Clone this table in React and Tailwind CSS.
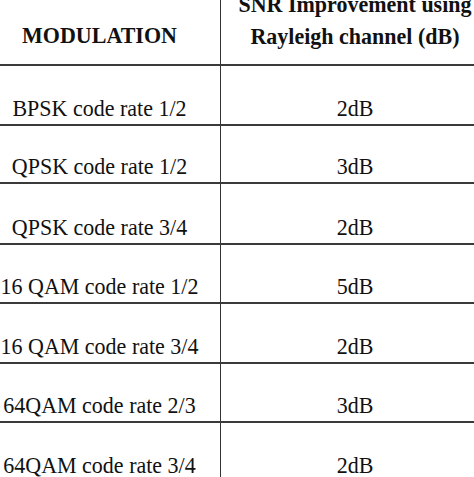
const rows = [
  ['BPSK code rate 1/2', '2dB', 'h-[60px]'],
  ['QPSK code rate 1/2', '3dB', 'h-[58px]'],
  ['QPSK code rate 3/4', '2dB', 'h-[61px]'],
  ['16 QAM code rate 1/2', '5dB', 'h-[59px]'],
  ['16 QAM code rate 3/4', '2dB', 'h-[60px]'],
  ['64QAM code rate 2/3', '3dB', 'h-[59px]'],
  ['64QAM code rate 3/4', '2dB', 'h-[60px]'],
];

export default function App() {
  return (
    <div
      className="w-[474px] h-[477px] overflow-hidden bg-white text-[#111] text-[22px]"
      style={{ fontFamily: '"Liberation Serif", "Times New Roman", serif' }}
    >
      <div className="flex border-b-2 border-[#3a3a3a] h-[66px]">
        <div className="w-[221px] shrink-0 border-r-[1.5px] border-[#333] pr-[21px] flex items-end justify-center pb-[15px] font-bold leading-[26px]">
          <span className="scale-y-[1.08] origin-bottom">MODULATION</span>
        </div>
        <div className="flex-1 pl-[15px] flex flex-col items-center justify-end pb-[10px] font-bold leading-[32px] whitespace-nowrap">
          <span className="scale-y-[1.08] origin-bottom">SNR Improvement using</span>
          <span className="scale-y-[1.08] origin-bottom">Rayleigh channel (dB)</span>
        </div>
      </div>
      {rows.map(([mod, snr, h]) => (
        <div key={mod} className={`flex border-b-2 border-[#3a3a3a] ${h}`}>
          <div className="w-[221px] shrink-0 border-r-[1.5px] border-[#333] pr-[21px] flex items-end justify-center pb-[2px] leading-[26px] whitespace-nowrap">
            <span className="scale-y-[1.08] origin-bottom">{mod}</span>
          </div>
          <div className="flex-1 pl-[15px] flex items-end justify-center pb-[2px] leading-[26px]">
            <span className="scale-y-[1.08] origin-bottom">{snr}</span>
          </div>
        </div>
      ))}
    </div>
  );
}
